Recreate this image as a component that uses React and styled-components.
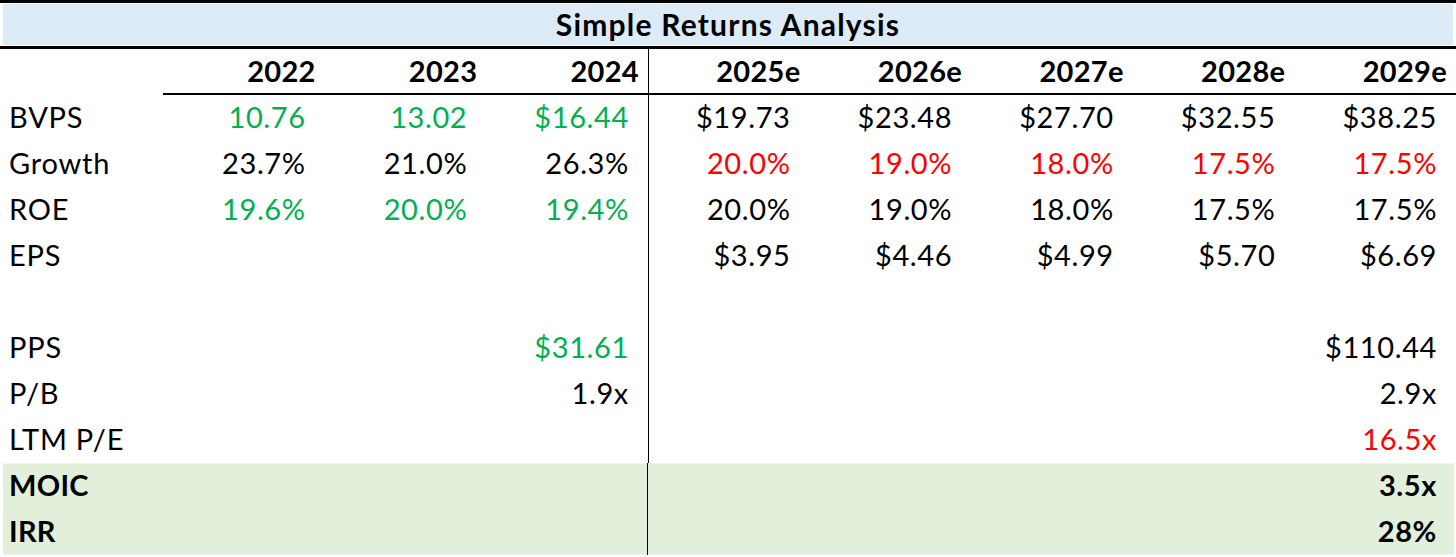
import React from 'react'
import styled, { createGlobalStyle } from 'styled-components'

const GlobalStyle = createGlobalStyle`
    html, body {
        margin: 0;
        padding: 0;
        background: #ffffff;
    }
    body {
        font-family: Lato, "Open Sans", sans-serif;
        color: #000000;
    }
`

const COLORS = {
    g: '#00b050',
    r: '#ff0000',
    k: '#000000',
}

export const Sheet = styled.div`
    width: 1456px;
    height: 557px;
    overflow: hidden;
    background: #ffffff;
`

export const TitleBar = styled.div`
    border-top: 3px solid #000;
    border-bottom: 3px solid #000;
    padding: 1px 3px;
`

export const TitleBand = styled.div`
    height: 41px;
    background: #ddebf7;
    display: flex;
    align-items: center;
    justify-content: center;
    font-size: 30px;
    font-weight: 700;
    letter-spacing: 1.2px;
    padding-bottom: 1px;
    box-sizing: border-box;
`

export const TotalsBand = styled.div`
    background: #e2efda;
    margin: 0 2px 0 3px;
    box-shadow: inset 0 1px 0 #eef5ea, inset 0 -1px 0 #eef5ea;
`

export const Row = styled.div`
    display: grid;
    grid-template-columns: ${props => props.inset ? 160 : 163}px repeat(8, 1fr);
    height: 46px;
`

export const HeadCell = styled.div`
    display: flex;
    align-items: center;
    justify-content: flex-end;
    padding-right: 9px;
    padding-bottom: 1px;
    font-size: 29px;
    font-weight: 700;
    letter-spacing: 0.3px;
    border-bottom: ${props => props.underline ? '2px solid #000' : '2px solid transparent'};
    border-left: ${props => props.divider ? '1px solid #000' : 'none'};
`

export const Label = styled.div`
    display: flex;
    align-items: center;
    padding-left: ${props => props.inset ? 6 : 9}px;
    padding-bottom: 3px;
    font-size: 29px;
    letter-spacing: ${props => props.bold ? 0.3 : 0.8}px;
    font-weight: ${props => props.bold ? 700 : 400};
`

export const Value = styled.div`
    display: flex;
    align-items: center;
    justify-content: flex-end;
    padding-right: ${props => props.inset ? 17 : 19}px;
    padding-bottom: 3px;
    font-size: 29px;
    letter-spacing: 0.6px;
    font-weight: ${props => props.bold ? 700 : 400};
    color: ${props => COLORS[props.tone] || COLORS.k};
    border-left: ${props => props.divider ? '1px solid #000' : 'none'};
`

const years = ['2022', '2023', '2024', '2025e', '2026e', '2027e', '2028e', '2029e']

const rows = [
    { label: 'BVPS', cells: [['10.76', 'g'], ['13.02', 'g'], ['$16.44', 'g'], ['$19.73'], ['$23.48'], ['$27.70'], ['$32.55'], ['$38.25']] },
    { label: 'Growth', cells: [['23.7%'], ['21.0%'], ['26.3%'], ['20.0%', 'r'], ['19.0%', 'r'], ['18.0%', 'r'], ['17.5%', 'r'], ['17.5%', 'r']] },
    { label: 'ROE', cells: [['19.6%', 'g'], ['20.0%', 'g'], ['19.4%', 'g'], ['20.0%'], ['19.0%'], ['18.0%'], ['17.5%'], ['17.5%']] },
    { label: 'EPS', cells: [[''], [''], [''], ['$3.95'], ['$4.46'], ['$4.99'], ['$5.70'], ['$6.69']] },
    { label: '', cells: [[''], [''], [''], [''], [''], [''], [''], ['']] },
    { label: 'PPS', cells: [[''], [''], ['$31.61', 'g'], [''], [''], [''], [''], ['$110.44']] },
    { label: 'P/B', cells: [[''], [''], ['1.9x'], [''], [''], [''], [''], ['2.9x']] },
    { label: 'LTM P/E', cells: [[''], [''], [''], [''], [''], [''], [''], ['16.5x', 'r']] },
]

const totals = [
    { label: 'MOIC', cells: [[''], [''], [''], [''], [''], [''], [''], ['3.5x']] },
    { label: 'IRR', cells: [[''], [''], [''], [''], [''], [''], [''], ['28%']] },
]

const DataRow = ({ row, bold, inset }) => (
    <Row inset={inset}>
        <Label bold={bold} inset={inset}>{row.label}</Label>
        {row.cells.map(([text, tone], i) => (
            <Value key={i} tone={tone} bold={bold} divider={i === 3} inset={inset}>
                {text}
            </Value>
        ))}
    </Row>
)

export default function App() {
    return (
        <>
            <GlobalStyle />
            <Sheet>
                <TitleBar>
                    <TitleBand>Simple Returns Analysis</TitleBand>
                </TitleBar>

                <Row>
                    <HeadCell />
                    {years.map((y, i) => (
                        <HeadCell key={y} underline divider={i === 3}>{y}</HeadCell>
                    ))}
                </Row>

                {rows.map((row, r) => (
                    <DataRow key={r} row={row} />
                ))}

                <TotalsBand>
                    {totals.map((row, r) => (
                        <DataRow key={r} row={row} bold inset />
                    ))}
                </TotalsBand>
            </Sheet>
        </>
    )
}
